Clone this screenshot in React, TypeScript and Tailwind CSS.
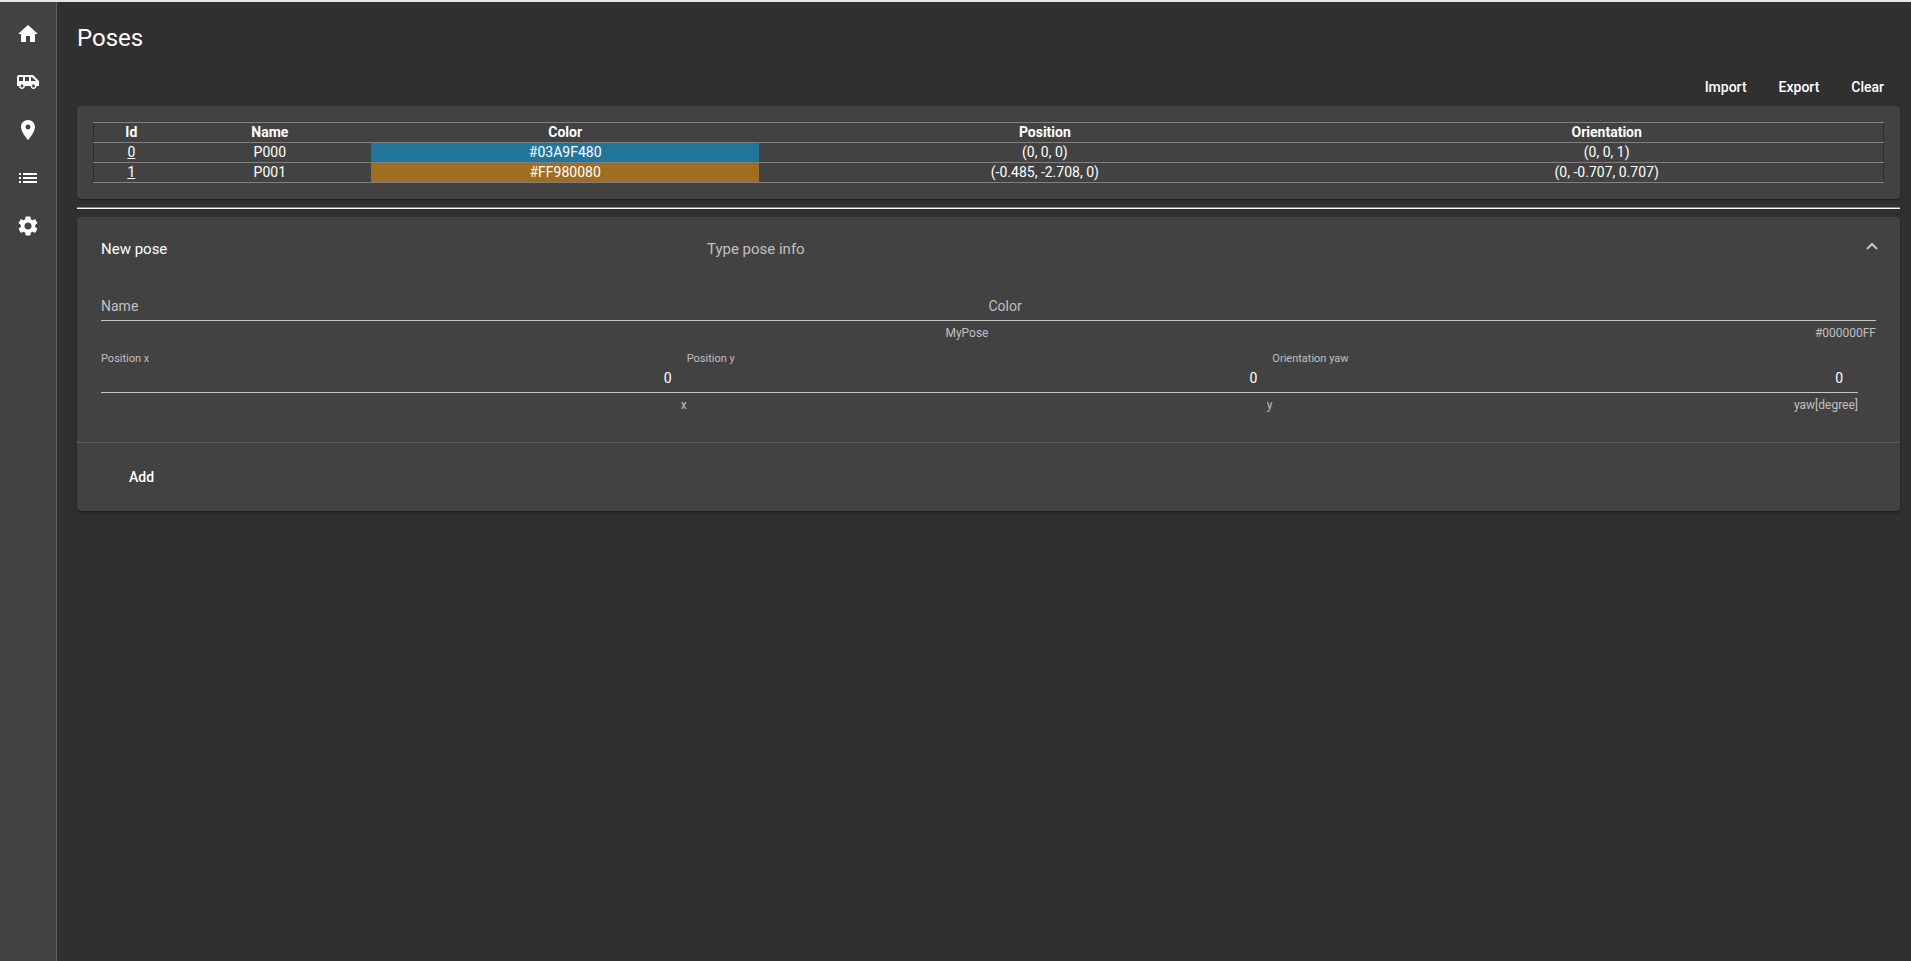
import { useState } from "react";
import type { ReactNode } from "react";
import { MdAirportShuttle, MdHome, MdList, MdPlace, MdSettings } from "react-icons/md";

const links = [
  { name: "Home", icon: MdHome },
  { name: "Vehicles", icon: MdAirportShuttle },
  { name: "Poses", icon: MdPlace },
  { name: "Tasks", icon: MdList },
  { name: "Settings", icon: MdSettings },
];

const poses = [
  { id: 0, name: "P000", color: "#03A9F480", position: "(0, 0, 0)", orientation: "(0, 0, 1)" },
  { id: 1, name: "P001", color: "#FF980080", position: "(-0.485, -2.708, 0)", orientation: "(0, -0.707, 0.707)" },
];

function TextButton({ children }: { children: ReactNode }) {
  return (
    <button type="button" className="h-9 rounded px-4 text-sm font-medium hover:bg-white/10">
      {children}
    </button>
  );
}

function TextField({ id, label, hint }: { id: string; label: string; hint: string }) {
  return (
    <div className="flex-1">
      <div className="grid border-b border-[#c6c6c6] pb-1">
        <input
          id={id}
          type="text"
          placeholder=" "
          className="peer col-start-1 row-start-1 h-5 w-full bg-transparent text-sm outline-none"
        />
        <label
          htmlFor={id}
          className="pointer-events-none col-start-1 row-start-1 text-sm leading-5 text-[#c0c0c0] peer-focus:invisible peer-[:not(:placeholder-shown)]:invisible"
        >
          {label}
        </label>
      </div>
      <p className="mt-1 text-right text-[12px] leading-4 text-[#c0c0c0]">{hint}</p>
    </div>
  );
}

function NumberField({ id, label, hint }: { id: string; label: string; hint: string }) {
  return (
    <div className="flex-1">
      <label htmlFor={id} className="block text-[11px] leading-4 text-[#c0c0c0]">
        {label}
      </label>
      <div className="border-b border-[#c6c6c6] pt-px pb-1">
        <input
          id={id}
          type="number"
          defaultValue={0}
          className="block h-5 w-full bg-transparent text-right text-sm outline-none"
        />
      </div>
      <p className="mt-1 text-right text-[12px] leading-4 text-[#c0c0c0]">{hint}</p>
    </div>
  );
}

export default function App() {
  const [open, setOpen] = useState(true);

  return (
    <div className="flex min-h-screen border-t-2 border-[#e8e8e8] bg-[#303030] font-[Roboto,sans-serif] text-white">
      <nav aria-label="Main" className="flex w-[57px] shrink-0 flex-col border-r border-[#5e5e5e] bg-[#424242] pt-2">
        {links.map(({ name, icon: Icon }) => (
          <a key={name} href="#" aria-label={name} className="flex h-12 items-center justify-center">
            <Icon className="size-6" />
          </a>
        ))}
      </nav>

      <main className="min-w-0 flex-1 pt-5 pr-[11px] pl-5">
        <h1 className="text-2xl leading-8">Poses</h1>

        <div className="mt-[15px] flex justify-end">
          <TextButton>Import</TextButton>
          <TextButton>Export</TextButton>
          <TextButton>Clear</TextButton>
        </div>

        <section className="mt-px rounded bg-[#424242] p-4 shadow-[0_2px_1px_-1px_rgba(0,0,0,0.2),0_1px_1px_0_rgba(0,0,0,0.14),0_1px_3px_0_rgba(0,0,0,0.12)]">
          <table className="w-full table-fixed border-collapse border-x border-[#2c2c2c] text-center text-sm leading-[19px]">
            <colgroup>
              <col className="w-[4.2%]" />
              <col className="w-[11.3%]" />
              <col className="w-[21.7%]" />
              <col className="w-[31.9%]" />
              <col className="w-[30.9%]" />
            </colgroup>
            <thead>
              <tr className="border-y border-[#808080]">
                <th>Id</th>
                <th>Name</th>
                <th>Color</th>
                <th>Position</th>
                <th>Orientation</th>
              </tr>
            </thead>
            <tbody>
              {poses.map((pose) => (
                <tr key={pose.id} className="border-y border-[#808080]">
                  <td>
                    <a href="#" className="underline">
                      {pose.id}
                    </a>
                  </td>
                  <td>{pose.name}</td>
                  <td style={{ backgroundColor: pose.color }}>{pose.color}</td>
                  <td>{pose.position}</td>
                  <td>{pose.orientation}</td>
                </tr>
              ))}
            </tbody>
          </table>
        </section>

        <hr className="my-2 h-0.5 border-t border-b border-t-[#8a8a8a] border-b-white" />

        <section className="rounded bg-[#424242] shadow-[0_3px_1px_-2px_rgba(0,0,0,0.2),0_2px_2px_0_rgba(0,0,0,0.14),0_1px_5px_0_rgba(0,0,0,0.12)]">
          <button
            type="button"
            aria-expanded={open}
            onClick={() => setOpen(!open)}
            className="flex h-16 w-full items-center pr-[22px] pl-6 text-left text-[15px]"
          >
            <span className="w-[34.1%]">New pose</span>
            <span className="flex-1 text-[#c0c0c0]">Type pose info</span>
            <svg viewBox="0 0 12 8" className="mb-1.5 h-2 w-3" fill="none" stroke="#c6c6c6" strokeWidth="2">
              <path d="M1 7 6 2 11 7" />
            </svg>
          </button>
          {open && (
            <form onSubmit={(event) => event.preventDefault()}>
              <div className="px-6 pt-[15px] pb-[29px]">
                <div className="flex">
                  <TextField id="pose-name" label="Name" hint="MyPose" />
                  <TextField id="pose-color" label="Color" hint="#000000FF" />
                </div>
                <div className="mt-2.5 flex pr-[18px]">
                  <NumberField id="pose-x" label="Position x" hint="x" />
                  <NumberField id="pose-y" label="Position y" hint="y" />
                  <NumberField id="pose-yaw" label="Orientation yaw" hint="yaw[degree]" />
                </div>
              </div>
              <div className="border-t border-[#5a5a5a] px-9 py-4">
                <TextButton>Add</TextButton>
              </div>
            </form>
          )}
        </section>
      </main>
    </div>
  );
}
